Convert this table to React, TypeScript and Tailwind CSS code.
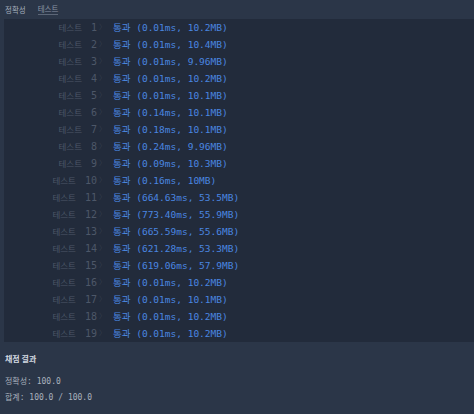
const rows = [
  ['1', '0.01ms, 10.2MB'],
  ['2', '0.01ms, 10.4MB'],
  ['3', '0.01ms, 9.96MB'],
  ['4', '0.01ms, 10.2MB'],
  ['5', '0.01ms, 10.1MB'],
  ['6', '0.14ms, 10.1MB'],
  ['7', '0.18ms, 10.1MB'],
  ['8', '0.24ms, 9.96MB'],
  ['9', '0.09ms, 10.3MB'],
  ['10', '0.16ms, 10MB'],
  ['11', '664.63ms, 53.5MB'],
  ['12', '773.40ms, 55.9MB'],
  ['13', '665.59ms, 55.6MB'],
  ['14', '621.28ms, 53.3MB'],
  ['15', '619.06ms, 57.9MB'],
  ['16', '0.01ms, 10.2MB'],
  ['17', '0.01ms, 10.1MB'],
  ['18', '0.01ms, 10.2MB'],
  ['19', '0.01ms, 10.2MB'],
];

const mono = "font-['DejaVu_Sans_Mono','Noto_Sans_CJK_KR',monospace]";

export default function App() {
  return (
    <div className={`w-[474px] h-[414px] bg-[#2b3648] overflow-hidden ${mono}`}>
      {/* Tabs */}
      <div className="flex items-center gap-[12px] h-[19px] pl-[5px] text-[7.5px] text-[#a3adbb] font-['Noto_Sans_CJK_KR',sans-serif]">
        <span>정확성</span>
        <span className="text-[#8a94a3] border-b border-[#5c6677] leading-[10px]">테스트</span>
      </div>

      {/* Result panel */}
      <div className="ml-[4px] h-[323px] bg-[#222b3b] text-[9.5px] leading-[17px]">
        {rows.map(([n, r]) => (
          <div key={n} className="flex items-center h-[17px]">
            <span className="w-[93px] flex justify-end items-center text-[#4d5768] whitespace-pre">
              <span className="text-[8.5px] font-['Noto_Sans_CJK_KR',sans-serif]">테스트</span>
              <span className="ml-[9px] text-[10px]">{n}</span>
            </span>
            <span className="w-[16px] pl-[2px] text-left text-[7px] text-[#343d4b]">〉</span>
            <span className="text-[#4a86e0] whitespace-pre">통과 ({r})</span>
          </div>
        ))}
      </div>

      {/* Summary */}
      <div className="pl-[5px] pt-[7px] text-[8px]">
        <div className="h-[20px] leading-[20px] font-bold text-[#d4dae2] font-['Noto_Sans_CJK_KR',sans-serif]">채점 결과</div>
        <div className="mt-[5px] h-[16px] leading-[16px] text-[#a9b1bd]">정확성: 100.0</div>
        <div className="h-[16px] leading-[16px] text-[#a9b1bd]">합계: 100.0 / 100.0</div>
      </div>
    </div>
  );
}
